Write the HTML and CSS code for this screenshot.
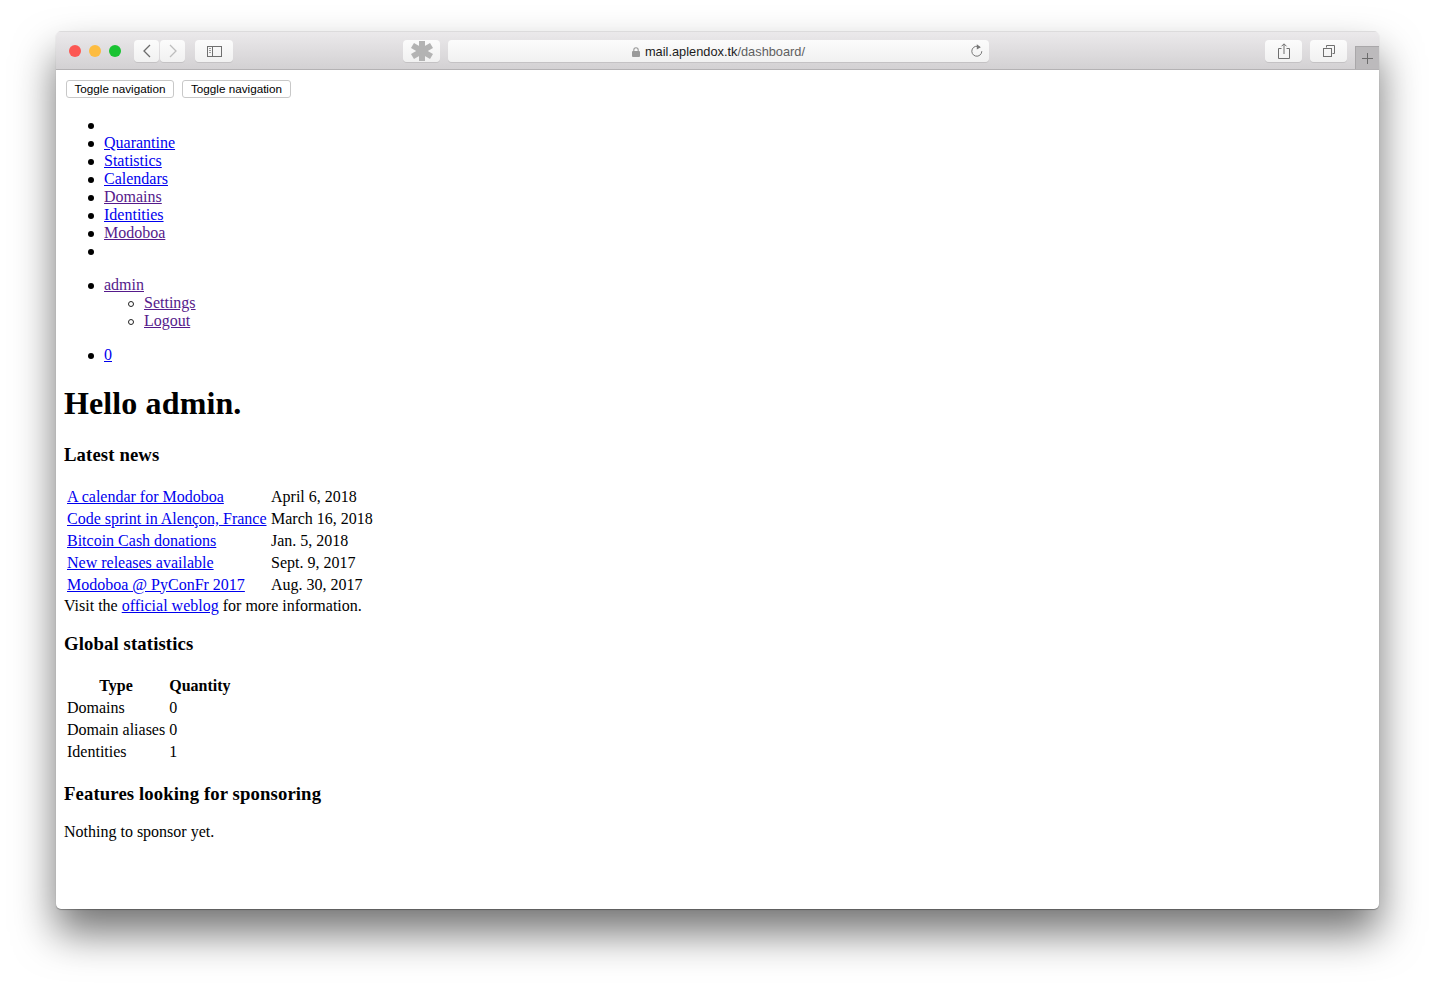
FILE: index.html
```html
<!DOCTYPE html>
<html lang="en">
<head>
<meta charset="utf-8">
<title>Modoboa</title>
<link rel="stylesheet" href="styles.css">
</head>
<body>
<div class="window">
  <header class="toolbar">
    <div class="lights">
      <span class="light red"></span><span class="light yellow"></span><span class="light green"></span>
    </div>
    <div class="nav-pair">
      <span class="tb-btn nav-btn"><svg width="10" height="16" viewBox="0 0 10 16"><path d="M8 2 2 8l6 6" fill="none" stroke="#6b6b6b" stroke-width="1.3"/></svg></span>
      <span class="tb-btn nav-btn"><svg width="10" height="16" viewBox="0 0 10 16"><path d="m2 2 6 6-6 6" fill="none" stroke="#bdbdbd" stroke-width="1.3"/></svg></span>
    </div>
    <span class="tb-btn sidebar-btn"><svg width="15" height="11" viewBox="0 0 15 11"><rect x=".5" y=".5" width="14" height="10" fill="none" stroke="#6f6f6f"/><path d="M5.500 0v11" stroke="#6f6f6f"/><path d="M2 2.500h2M2 4.500h2M2 6.500h2" stroke="#9a9a9a"/></svg></span>
    <span class="tb-btn ext-btn"><svg width="22" height="20" viewBox="-11 -10 22 20"><g fill="#b3b3b3"><rect x="-3" y="-10" width="6" height="20"/><rect x="-3" y="-11" width="6" height="22" transform="rotate(60)"/><rect x="-3" y="-11" width="6" height="22" transform="rotate(120)"/></g></svg></span>
    <div class="address">
      <svg class="lock" width="8" height="10" viewBox="0 0 8 10"><rect y="4" width="8" height="6" rx="1" fill="#9a9a9a"/><path d="M1.800 4.500V3a2.200 2.200 0 0 1 4.400 0v1.500" fill="none" stroke="#9a9a9a" stroke-width="1.100"/></svg>
      <span class="url">mail.aplendox.tk<span class="path">/dashboard/</span></span>
      <svg class="reload" width="13" height="14" viewBox="0 0 13 14"><path d="M9.900 3.300a5 5 0 1 0 1.900 3.900" fill="none" stroke="#777" stroke-width="1"/><path d="M6.800 0.300 10.800 3.300 6.800 5.500z" fill="#777"/></svg>
    </div>
    <div class="right-tools">
      <span class="tb-btn tool-btn"><svg width="12" height="16" viewBox="0 0 12 16"><path d="M3.500 5.500H.5v10h11v-10h-3" fill="none" stroke="#6f6f6f"/><path d="M6 11V1M3.500 3.300 6 .8l2.500 2.500" fill="none" stroke="#6f6f6f"/></svg></span>
      <span class="tb-btn tool-btn"><svg width="12" height="12" viewBox="0 0 12 12"><path d="M3.500 2.500v-2h8v8h-2" fill="none" stroke="#6f6f6f"/><rect x=".5" y="3.500" width="8" height="8" fill="none" stroke="#6f6f6f"/></svg></span>
    </div>
    <span class="new-tab"><svg width="11" height="11" viewBox="0 0 11 11"><path d="M5.500 0v11M0 5.500h11" stroke="#6c6c6c"/></svg></span>
  </header>
  <main class="page">
    <button class="toggle" type="button">Toggle navigation</button>
    <button class="toggle" type="button">Toggle navigation</button>
    <ul>
      <li>&nbsp;</li>
      <li><a href="#a">Quarantine</a></li>
      <li><a href="#b">Statistics</a></li>
      <li><a href="#c">Calendars</a></li>
      <li><a class="seen" href="#d">Domains</a></li>
      <li><a href="#e">Identities</a></li>
      <li><a class="seen" href="#f">Modoboa</a></li>
      <li>&nbsp;</li>
    </ul>
    <ul>
      <li><a class="seen" href="#g">admin</a>
        <ul>
          <li><a class="seen" href="#h">Settings</a></li>
          <li><a class="seen" href="#i">Logout</a></li>
        </ul>
      </li>
    </ul>
    <ul>
      <li><a href="#j">0</a></li>
    </ul>
    <h1>Hello admin.</h1>
    <h3>Latest news</h3>
    <table class="news">
      <tr><td><a href="#k">A calendar for Modoboa</a></td><td>April 6, 2018</td></tr>
      <tr><td><a href="#l">Code sprint in Alençon, France</a></td><td>March 16, 2018</td></tr>
      <tr><td><a href="#m">Bitcoin Cash donations</a></td><td>Jan. 5, 2018</td></tr>
      <tr><td><a href="#n">New releases available</a></td><td>Sept. 9, 2017</td></tr>
      <tr><td><a href="#o">Modoboa @ PyConFr 2017</a></td><td>Aug. 30, 2017</td></tr>
    </table>
    <div>Visit the <a href="#p">official weblog</a> for more information.</div>
    <h3>Global statistics</h3>
    <table>
      <tr><th>Type</th><th>Quantity</th></tr>
      <tr><td>Domains</td><td>0</td></tr>
      <tr><td>Domain aliases</td><td>0</td></tr>
      <tr><td>Identities</td><td>1</td></tr>
    </table>
    <h3>Features looking for sponsoring</h3>
    <div>Nothing to sponsor yet.</div>
  </main>
</div>
</body>
</html>
```
FILE: styles.css
```css
html, body { height: 100%; }
body {
  margin: 0;
  padding: 31px 56px 0;
  box-sizing: border-box;
  background: #fff;
  overflow: hidden;
  font-family: "Liberation Serif", serif;
  font-size: 16px;
  color: #000;
}
.window {
  width: 1323px;
  height: 878px;
  background: #fff;
  border-radius: 5px;
  overflow: hidden;
  display: flex;
  flex-direction: column;
  box-shadow: 0 24px 42px rgba(0, 0, 0, .55), 0 1px 1px rgba(0, 0, 0, .3);
}
.toolbar {
  height: 39px;
  flex: none;
  box-sizing: border-box;
  display: flex;
  align-items: center;
  position: relative;
  padding: 1px 0 0 13px;
  background: linear-gradient(#ebe9eb, #d3d1d3);
  border-top: 1px solid #dcdbdc;
  border-bottom: 1px solid #b4b2b4;
}
.lights { display: flex; gap: 8px; }
.light { width: 12px; height: 12px; border-radius: 50%; }
.red { background: #fc5753; }
.yellow { background: #fdbc40; }
.green { background: #19c332; }
.tb-btn {
  display: flex;
  align-items: center;
  justify-content: center;
  box-sizing: border-box;
  height: 22px;
  background: linear-gradient(#fcfcfc, #f1f1f1);
  border-radius: 4px;
  box-shadow: 0 1px 0 #c4c2c4;
}
.nav-pair { display: flex; gap: 1px; margin-left: 13px; }
.nav-btn { width: 25px; }
.sidebar-btn { width: 38px; margin-left: 10px; }
.ext-btn { width: 37px; margin-left: 170px; }
.address {
  width: 541px;
  height: 22px;
  margin-left: 8px;
  padding-top: 1px;
  box-sizing: border-box;
  display: flex;
  align-items: center;
  justify-content: center;
  position: relative;
  background: linear-gradient(#fcfcfc, #f1f1f1);
  border-radius: 4px;
  box-shadow: 0 1px 0 #c4c2c4;
  font-family: "Liberation Sans", sans-serif;
  font-size: 12.8px;
  color: #1b1b1b;
}
.lock { margin-right: 5px; }
.path { color: #5f5f5f; }
.reload { position: absolute; right: 6px; top: 4px; }
.right-tools { display: flex; gap: 8px; margin-left: 276px; }
.tool-btn { width: 37px; }
.new-tab {
  position: absolute;
  right: 0;
  bottom: 0;
  width: 24px;
  height: 23px;
  display: flex;
  align-items: center;
  justify-content: center;
  background: #bcbabc;
  border-left: 1px solid #a9a7a9;
  border-top: 1px solid #a9a7a9;
  box-sizing: border-box;
}
.page {
  padding: 10px 8px 0;
  line-height: 18px;
}
.toggle {
  display: inline-block;
  box-sizing: border-box;
  width: 108px;
  height: 18px;
  margin: 0 2px 2px;
  padding: 0;
  vertical-align: top;
  background: #fff;
  border: 1px solid #c8c8c8;
  border-radius: 3px;
  font-family: "Liberation Sans", sans-serif;
  font-size: 11.7px;
  line-height: 16px;
  color: #000;
}
.toggle + .toggle { width: 109px; }
ul { margin: 16px 0; padding-left: 40px; list-style: none; }
ul ul { margin: 0; }
li { position: relative; }
li::before {
  content: "";
  position: absolute;
  left: -16.5px;
  top: 6.5px;
  width: 6px;
  height: 6px;
  border-radius: 50%;
  background: #000;
}
ul ul li::before {
  top: 6.5px;
  box-sizing: border-box;
  background: none;
  border: 1px solid #222;
}
a { color: #0000ee; }
a.seen { color: #551a8b; }
h1 { font-size: 32px; line-height: 37px; margin: 21.44px 0; letter-spacing: .12px; }
h3 { font-size: 18.72px; line-height: 22px; margin: 18.72px 0; letter-spacing: .12px; }
table { border-spacing: 2px; }
td, th { padding: 1px; line-height: 18px; }
th { text-align: center; }
.news td:first-child { width: 200px; }
```
